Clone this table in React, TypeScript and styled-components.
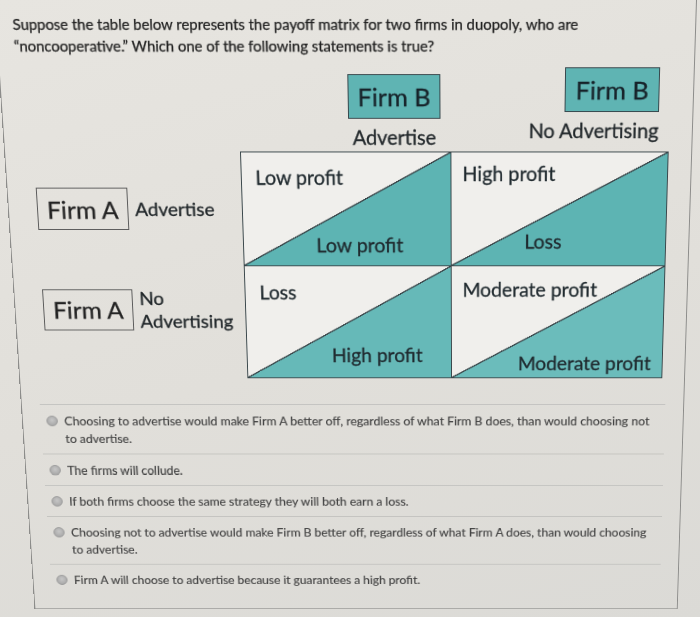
import React from "react";
import styled, { createGlobalStyle } from "styled-components";

const Global = createGlobalStyle`
  html, body {
    margin: 0;
    padding: 0;
    width: 700px;
    height: 617px;
    overflow: hidden;
  }
  body {
    background: linear-gradient(165deg, #e7e5e0 0%, #e1dfda 55%, #dbdad6 100%);
    font-family: Lato, "Open Sans", sans-serif;
  }
`;

const Stage = styled.div`
  width: 700px;
  height: 617px;
  overflow: hidden;
`;

const Page = styled.div`
  width: 700px;
  height: 617px;
  transform-origin: 470px 0;
  transform: perspective(400px) rotateX(-3.2deg);
`;

const Frame = styled.div`
  box-sizing: border-box;
  width: 703px;
  height: 667px;
  margin-left: -6px;
  border: 1px solid #8c8c8a;
  border-top: none;
  padding: 12.5px 16px 0 16px;
`;

const Question = styled.p`
  margin: 0;
  max-width: 620px;
  font-size: 14.9px;
  line-height: 22px;
  color: #1e1e1e;
  -webkit-text-stroke: 0.25px #1e1e1e;
`;

const Header = styled.div`
  display: flex;
  height: 95px;
  margin: 3.5px 0 0 335px;
`;

const HeaderGroup = styled.div<{ $top: number; $left: number; $width: number; $align: string }>`
  display: flex;
  flex-direction: column;
  align-items: ${(p) => p.$align};
  width: ${(p) => p.$width}px;
  margin: ${(p) => p.$top}px 0 0 ${(p) => p.$left}px;
`;

const FirmB = styled.div<{ $width: number }>`
  box-sizing: border-box;
  width: ${(p) => p.$width}px;
  height: 46px;
  display: flex;
  align-items: center;
  justify-content: center;
  background: #5fb4b3;
  border: 1.5px solid #37474c;
  font-size: 25.5px;
  color: #17232a;
  -webkit-text-stroke: 0.3px #17232a;
`;

const HeaderLabel = styled.div`
  margin-top: 7.5px;
  font-size: 20.3px;
  line-height: 22px;
  color: #22282b;
  -webkit-text-stroke: 0.3px #22282b;
  white-space: nowrap;
`;

const Board = styled.div`
  display: flex;
  align-items: flex-start;
`;

const SideColumn = styled.div`
  width: 224px;
  display: flex;
  flex-direction: column;
`;

const SideRow = styled.div<{ $height: number; $top: number }>`
  box-sizing: border-box;
  height: ${(p) => p.$height}px;
  padding: ${(p) => p.$top}px 0 0 13px;
`;

const SideGroup = styled.div`
  display: flex;
  align-items: center;
  gap: 7px;
`;

const FirmA = styled.div`
  box-sizing: border-box;
  width: 94px;
  height: 45px;
  display: flex;
  align-items: center;
  justify-content: center;
  border: 1.5px solid #5a5a5a;
  font-size: 25.5px;
  color: #232323;
  -webkit-text-stroke: 0.3px #232323;
`;

const SideLabel = styled.div`
  font-size: 19.5px;
  line-height: 25px;
  color: #22282b;
  -webkit-text-stroke: 0.3px #22282b;
`;

const Matrix = styled.div`
  display: grid;
  grid-template-columns: 213.5px 220.5px;
  grid-template-rows: 119.5px 121.5px;
  gap: 1.5px;
  background: #3a474b;
  border: 1.5px solid #3a474b;
`;

const Cell = styled.div<{ $teal: string }>`
  display: flex;
  flex-direction: column;
  align-items: flex-start;
  background: linear-gradient(
    to bottom right,
    #f0efec calc(50% - 0.9px),
    #3a474b calc(50% - 0.5px),
    #3a474b calc(50% + 0.5px),
    ${(p) => p.$teal} calc(50% + 0.9px)
  );
`;

const CellText = styled.div<{ $top: number; $left: number }>`
  display: flex;
  justify-content: center;
  margin: ${(p) => p.$top}px 0 0 ${(p) => p.$left}px;
  font-size: 20.2px;
  line-height: 22px;
  color: #1f292e;
  -webkit-text-stroke: 0.3px #1f292e;
  white-space: nowrap;
`;

const CenteredText = styled(CellText)`
  width: 0;
`;

const Options = styled.div`
  margin: 29px 3px 0 3px;
`;

const OptionRow = styled.div`
  display: flex;
  align-items: flex-start;
  gap: 7.5px;
  padding: 8px 10px 7px 5.5px;
  border-top: 1px solid #c2c2bf;
`;

const Radio = styled.span`
  flex-shrink: 0;
  box-sizing: border-box;
  width: 12px;
  height: 12px;
  margin-top: 4px;
  border-radius: 50%;
  border: 1px solid #999;
  background: radial-gradient(circle at 50% 40%, #c6c6c6, #a0a0a0);
`;

const OptionText = styled.div`
  max-width: 628px;
  font-size: 13px;
  line-height: 20px;
  color: #434343;
  -webkit-text-stroke: 0.15px #434343;
`;

type CellData = {
  top: string;
  bottom: string;
  tx: number;
  ty: number;
  bx: number;
  by: number;
  teal: string;
};

const cells: CellData[] = [
  { top: "Low profit", bottom: "Low profit", tx: 14, ty: 26, bx: 120, by: 98.3, teal: "#5db4b3" },
  { top: "High profit", bottom: "Loss", tx: 11.3, ty: 22, bx: 94.5, by: 94, teal: "#5db4b3" },
  { top: "Loss", bottom: "High profit", tx: 14.5, ty: 28, bx: 136.5, by: 97.2, teal: "#66b9b8" },
  { top: "Moderate profit", bottom: "Moderate profit", tx: 11.2, ty: 24.8, bx: 139.5, by: 106.1, teal: "#6bbcbb" },
];

const options = [
  "Choosing to advertise would make Firm A better off, regardless of what Firm B does, than would choosing not to advertise.",
  "The firms will collude.",
  "If both firms choose the same strategy they will both earn a loss.",
  "Choosing not to advertise would make Firm B better off, regardless of what Firm A does, than would choosing to advertise.",
  "Firm A will choose to advertise because it guarantees a high profit.",
];

export default function App() {
  return (
    <>
      <Global />
      <Stage>
        <Page>
          <Frame>
            <Question>
              Suppose the table below represents the payoff matrix for two firms in duopoly, who are
              “noncooperative.”  Which one of the following statements is true?
            </Question>
            <Header>
              <HeaderGroup $top={15} $left={0} $width={94} $align="center">
                <FirmB $width={94}>Firm B</FirmB>
                <HeaderLabel>Advertise</HeaderLabel>
              </HeaderGroup>
              <HeaderGroup $top={8} $left={88} $width={134} $align="flex-end">
                <FirmB $width={96}>Firm B</FirmB>
                <HeaderLabel>No Advertising</HeaderLabel>
              </HeaderGroup>
            </Header>
            <Board>
              <SideColumn>
                <SideRow $height={121} $top={38}>
                  <SideGroup>
                    <FirmA>Firm A</FirmA>
                    <SideLabel>Advertise</SideLabel>
                  </SideGroup>
                </SideRow>
                <SideRow $height={123} $top={23}>
                  <SideGroup>
                    <FirmA>Firm A</FirmA>
                    <SideLabel>
                      No
                      <br />
                      Advertising
                    </SideLabel>
                  </SideGroup>
                </SideRow>
              </SideColumn>
              <Matrix>
                {cells.map((c, i) => (
                  <Cell key={i} $teal={c.teal}>
                    <CellText $top={c.ty - 11} $left={c.tx}>
                      {c.top}
                    </CellText>
                    <CenteredText $top={c.by - c.ty - 22} $left={c.bx}>
                      {c.bottom}
                    </CenteredText>
                  </Cell>
                ))}
              </Matrix>
            </Board>
            <Options>
              {options.map((o, i) => (
                <OptionRow key={i}>
                  <Radio />
                  <OptionText>{o}</OptionText>
                </OptionRow>
              ))}
            </Options>
          </Frame>
        </Page>
      </Stage>
    </>
  );
}
